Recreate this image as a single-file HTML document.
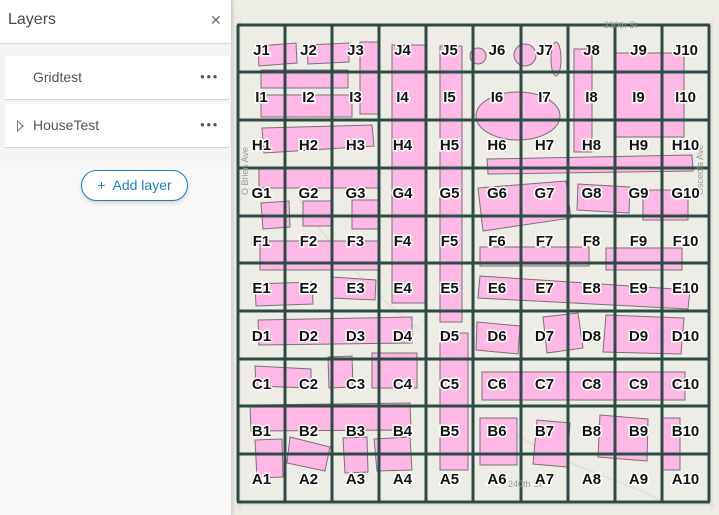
<!DOCTYPE html>
<html><head><meta charset="utf-8"><style>
*{box-sizing:border-box;margin:0;padding:0}
body{width:719px;height:515px;overflow:hidden;font-family:"Liberation Sans",sans-serif;background:#ecece4;position:relative}
#panel{position:absolute;left:0;top:0;width:232px;height:515px;background:#f3f3f3;border-right:1px solid #d4d4d4;box-shadow:1px 0 3px rgba(0,0,0,.15)}
#hdr{height:44px;background:#fff;border-bottom:1px solid #dcdcdc;position:relative}
#hdr .t{position:absolute;left:8px;top:11px;font-size:16px;color:#4a4a4a}
#hdr .x{position:absolute;left:210px;top:12px;font-size:14px;color:#6a6a6a}
.item{position:absolute;left:5px;width:224px;height:44px;background:#fff;border-bottom:1px solid #d4d4d4}
.item .n{position:absolute;left:28px;top:13px;font-size:14px;color:#555}
.item .d{position:absolute;left:195px;top:16px;font-size:8px;color:#555;letter-spacing:1.5px}
.tri{position:absolute;left:12px;top:16px;width:0;height:0;border-left:7px solid #777;border-top:6px solid transparent;border-bottom:6px solid transparent}
.tri:after{content:"";position:absolute;left:-6px;top:-4px;border-left:4px solid #fff;border-top:4px solid transparent;border-bottom:4px solid transparent}
#sep{position:absolute;left:0;top:161px;width:231px;height:354px;background:#f8f8f8}
#btn{position:absolute;left:81px;top:170px;width:107px;height:31px;border:1px solid #1a7fc4;border-radius:16px;background:#fff;color:#1a7fc4;font-size:14px;text-align:center;line-height:29px;box-shadow:0 2px 4px rgba(0,0,0,.15)}
svg{position:absolute;left:0;top:0}
</style></head><body>
<svg width="719" height="515">
<rect x="232" y="0" width="487" height="515" fill="#eeede5"/>
<g fill="none" stroke="#dcdcd2" stroke-width="1.2">
<path d="M240 20 L240 510"/><path d="M712 20 L712 510"/><path d="M236 505 L716 505"/>
<path d="M300 200 C340 260 380 300 420 330"/><path d="M500 420 C540 460 600 470 660 500"/>
</g>
<g fill="#ffb8e6" stroke="#7a6f78" stroke-width="1">
<polygon points="258,46 296,43 297,63 259,66"/>
<polygon points="307,45 349,43 349,62 308,64"/>
<rect x="360" y="42" width="18" height="72"/>
<rect x="392" y="45" width="33" height="258"/>
<rect x="440" y="46" width="22" height="276"/>
<circle cx="478" cy="56" r="8"/>
<circle cx="525" cy="55" r="11"/>
<ellipse cx="556" cy="59" rx="5" ry="17"/>
<rect x="574" y="49" width="18" height="103"/>
<rect x="615" y="53" width="69" height="84"/>
<rect x="261" y="70" width="87" height="18"/>
<rect x="261" y="95" width="91" height="22"/>
<ellipse cx="518" cy="116" rx="42" ry="24"/>
<polygon points="262,128 372,125 374,146 264,153"/>
<rect x="259" y="169" width="119" height="19"/>
<polygon points="487,159 692,155 693,171 488,174"/>
<polygon points="478,188 566,181 571,218 483,231"/>
<polygon points="578,184 630,187 629,213 577,210"/>
<rect x="643" y="190" width="45" height="30"/>
<polygon points="261,203 289,201 290,227 263,229"/>
<rect x="303" y="201" width="28" height="25"/>
<rect x="352" y="200" width="26" height="29"/>
<rect x="260" y="241" width="118" height="29"/>
<rect x="480" y="247" width="109" height="19"/>
<rect x="606" y="248" width="76" height="22"/>
<polygon points="255,284 312,282 313,304 256,306"/>
<polygon points="332,277 376,280 375,300 331,298"/>
<polygon points="480,276 690,290 688,309 478,298"/>
<polygon points="258,320 412,317 412,343 259,345"/>
<rect x="440" y="333" width="28" height="137"/>
<polygon points="477,322 520,326 518,354 476,350"/>
<polygon points="543,317 578,313 583,348 547,353"/>
<polygon points="606,315 684,318 681,354 603,352"/>
<polygon points="255,366 311,369 311,388 256,386"/>
<polygon points="328,357 352,356 353,387 329,388"/>
<rect x="372" y="353" width="45" height="35"/>
<rect x="482" y="372" width="203" height="28"/>
<polygon points="250,405 410,403 411,430 251,431"/>
<polygon points="255,440 282,439 283,477 257,478"/>
<polygon points="290,437 330,447 325,471 287,463"/>
<polygon points="343,438 367,437 368,472 345,473"/>
<polygon points="374,439 410,437 412,470 377,471"/>
<rect x="480" y="418" width="37" height="47"/>
<polygon points="537,420 570,423 567,467 533,464"/>
<polygon points="600,415 648,419 647,461 598,457"/>
<rect x="662" y="418" width="18" height="52"/>
</g>
<g stroke="#2c4b47" stroke-width="3" fill="none">
<path d="M238 25V502M285 25V502M332 25V502M379 25V502M426 25V502M473 25V502M521 25V502M568 25V502M615 25V502M662 25V502M709 25V502"/>
<path d="M237 25H710M237 72H710M237 120H710M237 168H710M237 216H710M237 263H710M237 311H710M237 359H710M237 406H710M237 454H710M237 502H710"/>
</g>
<g font-family="Liberation Sans,sans-serif" font-size="9" fill="#999">
<text x="604" y="28">230th St</text>
<text x="508" y="487">240th St</text>
<text transform="translate(248,195) rotate(-90)">O Brien Ave</text>
<text transform="translate(703,195) rotate(-90)">Osceola Ave</text>
</g>
<g id="labels" font-family="Liberation Sans,sans-serif" font-weight="bold" font-size="15" fill="#111" stroke="#fff" stroke-width="3" paint-order="stroke" text-anchor="middle"></g>
</svg>
<div id="panel">
<div id="hdr"><span class="t">Layers</span><span class="x">✕</span></div>
<div class="item" style="top:56px"><span class="n" style="left:28px">Gridtest</span><span class="d">●●●</span></div>
<div class="item" style="top:104px"><div class="tri"></div><span class="n">HouseTest</span><span class="d">●●●</span></div>
<div id="sep"></div>
<div id="btn">+&nbsp; Add layer</div>
</div>
<script>
var g=document.getElementById('labels'),rows="JIHGFEDCBA",xs=[238,285,332,379,426,473,521,568,615,662,709],ys=[25,72,120,168,216,263,311,359,406,454];
var s='';for(var r=0;r<10;r++)for(var c=0;c<10;c++){s+='<text x="'+((xs[c]+xs[c+1])/2)+'" y="'+(ys[r]+30)+'">'+rows[r]+(c+1)+'</text>';}
g.innerHTML=s;
</script>
</body></html>
